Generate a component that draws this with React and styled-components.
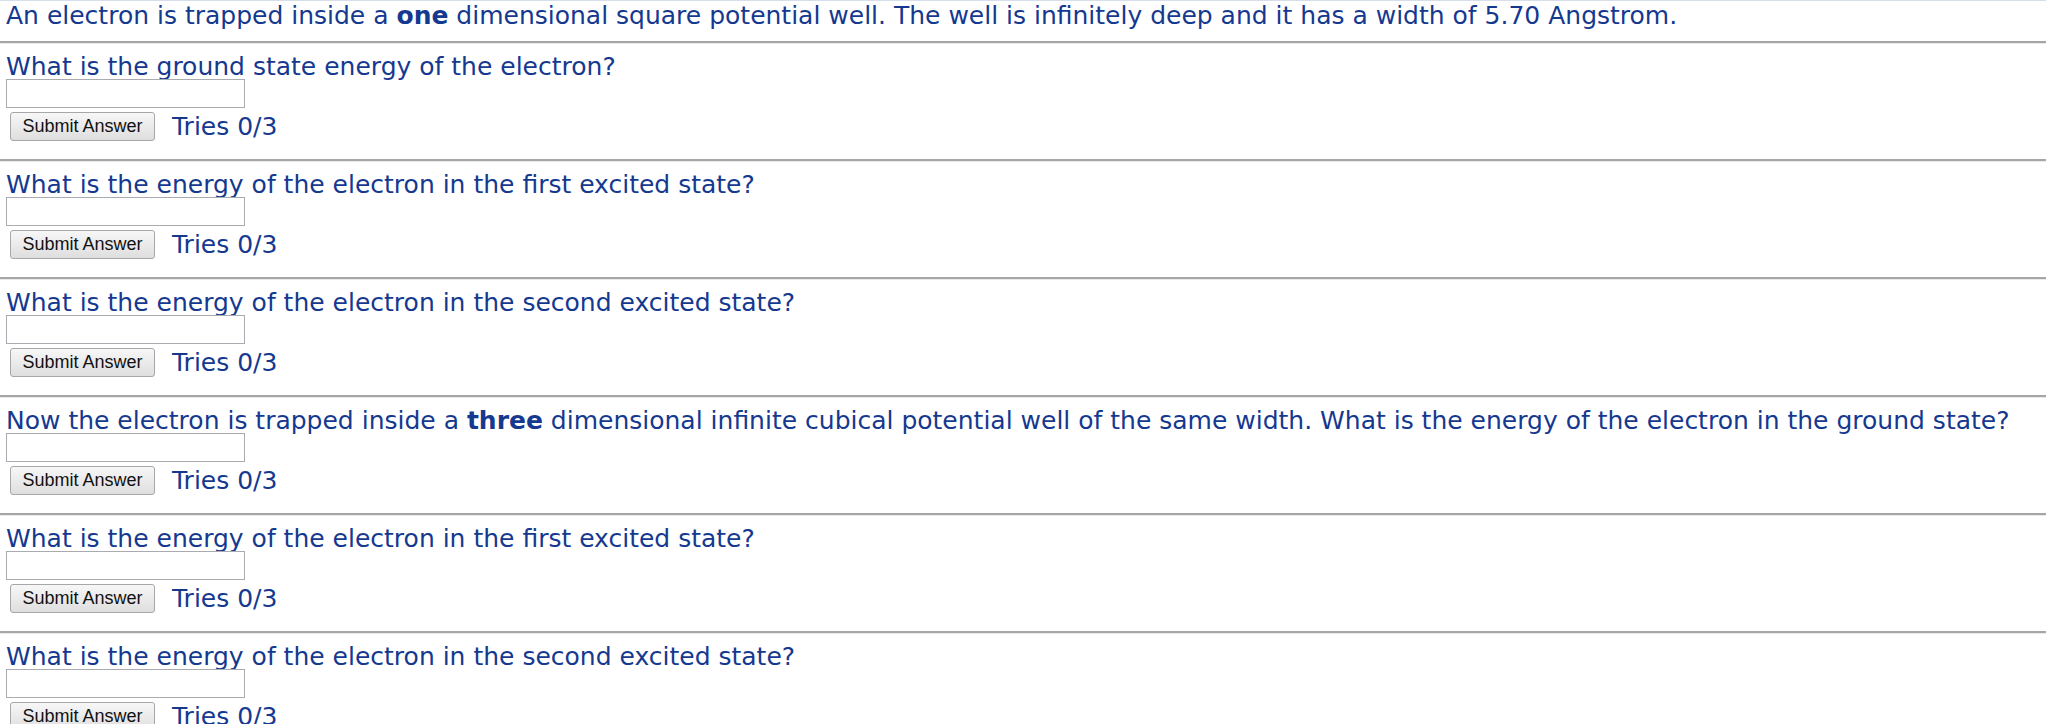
import React from "react";
import styled, { createGlobalStyle } from "styled-components";

const GlobalStyle = createGlobalStyle`
  html, body {
    margin: 0;
    padding: 0;
    background: #ffffff;
  }
`;

// STYLED
const Page = styled.div`
  border-top: 1px solid #d6dee9;
  padding: 0 0 0 6px;
  font-family: "DejaVu Sans", Verdana, sans-serif;
  font-size: 25px;
  color: #15398f;
  overflow: hidden;
  height: 723px;
`;

const Intro = styled.div`
  line-height: 24px;
  margin-top: 3px;
  margin-bottom: 13px;
  white-space: nowrap;
`;

const Rule = styled.div`
  margin-left: -6px;
  height: 1px;
  border-top: 2px solid #a6a6a6;
  background: #e9e9e9;
`;

const Part = styled.div`
  display: flex;
  flex-direction: column;
  align-items: flex-start;
  padding-bottom: 18px;
`;

const Question = styled.div`
  margin-top: 11px;
  line-height: 24px;
  white-space: nowrap;
`;

const AnswerBox = styled.input`
  box-sizing: border-box;
  width: 239px;
  height: 29px;
  margin: 0;
  border: 1px solid #a9abb0;
  background: #ffffff;
  font-size: 18px;
`;

const SubmitRow = styled.div`
  display: flex;
  align-items: center;
  gap: 17px;
  margin-top: 4px;
  padding-left: 4px;
`;

const SubmitButton = styled.button`
  box-sizing: border-box;
  width: 145px;
  height: 29px;
  padding: 0;
  border: 1px solid #a7a7a7;
  border-radius: 3px;
  background: linear-gradient(#f7f7f7, #dedede);
  font-family: "Liberation Sans", Arial, sans-serif;
  font-size: 18px;
  color: #111111;
`;

const Tries = styled.span`
  line-height: 29px;
  white-space: nowrap;
`;

const questions = [
  <>What is the ground state energy of the electron?</>,
  <>What is the energy of the electron in the first excited state?</>,
  <>What is the energy of the electron in the second excited state?</>,
  <>
    Now the electron is trapped inside a <b>three</b> dimensional infinite
    cubical potential well of the same width. What is the energy of the
    electron in the ground state?
  </>,
  <>What is the energy of the electron in the first excited state?</>,
  <>What is the energy of the electron in the second excited state?</>,
];

function QuestionPart({ text }) {
  return (
    <>
      <Rule />
      <Part>
        <Question>{text}</Question>
        <AnswerBox type="text" />
        <SubmitRow>
          <SubmitButton type="button">Submit Answer</SubmitButton>
          <Tries>Tries 0/3</Tries>
        </SubmitRow>
      </Part>
    </>
  );
}

export default function App() {
  return (
    <>
      <GlobalStyle />
      <Page>
        <Intro>
          An electron is trapped inside a <b>one</b> dimensional square
          potential well. The well is infinitely deep and it has a width of
          5.70 Angstrom.
        </Intro>
        {questions.map((q, i) => (
          <QuestionPart key={i} text={q} />
        ))}
      </Page>
    </>
  );
}
